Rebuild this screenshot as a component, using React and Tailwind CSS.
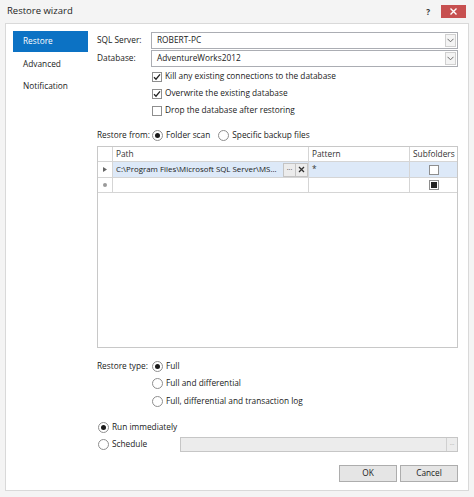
import React from "react";

const font = { fontFamily: '"Open Sans", "Noto Sans", sans-serif' };

function Chevron() {
  return (
    <svg width="7" height="5" viewBox="0 0 7 5">
      <path d="M0.5 0.8 L3.5 3.8 L6.5 0.8" fill="none" stroke="#6b6b6b" strokeWidth="1" />
    </svg>
  );
}

function Combo({ value }) {
  return (
    <div className="flex h-[17px] flex-1 items-center border border-[#abadb3] bg-white">
      <div className="flex-1 pl-[5px] text-[8.3px] text-[#1a1a1a]">{value}</div>
      <div className="mr-[1px] flex h-[13px] w-[11px] items-center justify-center border border-[#d0d0d0] bg-[#f4f4f4]">
        <Chevron />
      </div>
    </div>
  );
}

function Check({ checked }) {
  return (
    <div className="flex h-[10px] w-[10px] items-center justify-center border border-[#8e8e8e] bg-white">
      {checked && (
        <svg width="8" height="8" viewBox="0 0 8 8">
          <path d="M1 4.2 L3 6.2 L7 1.4" fill="none" stroke="#222" strokeWidth="1.3" />
        </svg>
      )}
    </div>
  );
}

function CheckRow({ checked, label }) {
  return (
    <div className="flex h-[17px] items-center pl-[55px]">
      <Check checked={checked} />
      <span className="ml-[3px] text-[8.3px] text-[#1a1a1a]">{label}</span>
    </div>
  );
}

function Radio({ on }) {
  return (
    <div className="flex h-[11px] w-[11px] items-center justify-center rounded-full border border-[#8e8e8e] bg-white">
      {on && <div className="h-[5px] w-[5px] rounded-full bg-[#1a1a1a]" />}
    </div>
  );
}

function RadioLabel({ on, label }) {
  return (
    <div className="flex items-center">
      <Radio on={on} />
      <span className="ml-[3px] text-[8.3px] text-[#1a1a1a]">{label}</span>
    </div>
  );
}

export default function App() {
  return (
    <div className="flex h-[497px] w-[474px] flex-col bg-[#f4f4f4]" style={font}>
      {/* title bar */}
      <div className="flex h-[23px] items-center pl-[7px] pr-[8px]">
        <span className="text-[9.5px] text-[#1e1e1e]">Restore wizard</span>
        <div className="flex-1" />
        <span className="mr-[11px] text-[8px] font-bold text-[#333]">?</span>
        <div className="flex h-[13px] w-[25px] items-center justify-center bg-[#c75050]">
          <svg width="7" height="7" viewBox="0 0 7 7">
            <path d="M0.5 0.5 L6.5 6.5 M6.5 0.5 L0.5 6.5" stroke="#fff" strokeWidth="1.4" />
          </svg>
        </div>
      </div>

      {/* panel */}
      <div className="mx-[5px] flex h-[468px] border border-[#d9d9d9] bg-white">
        {/* nav */}
        <div className="flex w-[91px] flex-col pl-[7px] pt-[7px] text-[8.3px] text-[#1a1a1a]">
          <div className="flex h-[21px] w-[75px] items-center bg-[#0c72c4] pl-[10px] text-white">Restore</div>
          <div className="mt-[1px] flex h-[22px] w-[75px] items-center pl-[10px]">Advanced</div>
          <div className="flex h-[22px] w-[75px] items-center pl-[10px]">Notification</div>
        </div>

        {/* content */}
        <div className="flex w-[361px] flex-col pt-[8px]">
          <div className="flex items-center">
            <span className="w-[54px] text-[8.3px] text-[#1a1a1a]">SQL Server:</span>
            <Combo value="ROBERT-PC" />
          </div>
          <div className="mt-[1px] flex items-center">
            <span className="w-[54px] text-[8.3px] text-[#1a1a1a]">Database:</span>
            <Combo value="AdventureWorks2012" />
          </div>
          <div className="mt-[1px]">
            <CheckRow checked label="Kill any existing connections to the database" />
            <CheckRow checked label="Overwrite the existing database" />
            <CheckRow checked={false} label="Drop the database after restoring" />
          </div>

          <div className="mt-[8px] flex h-[16px] items-center">
            <span className="w-[54px] whitespace-nowrap text-[8.3px] text-[#1a1a1a]">Restore from:</span>
            <div className="ml-[1px] flex items-center gap-[8px]">
              <RadioLabel on label="Folder scan" />
              <RadioLabel on={false} label="Specific backup files" />
            </div>
          </div>

          {/* grid */}
          <div className="mt-[3px] h-[202px] border border-[#c8c8c8] bg-white text-[8.3px] text-[#333]">
            <div className="flex h-[15px] border-b border-[#d5d5d5]">
              <div className="w-[15px] border-r border-[#d5d5d5]" />
              <div className="flex w-[196px] items-center border-r border-[#d5d5d5] pl-[3px]">Path</div>
              <div className="flex w-[101px] items-center border-r border-[#d5d5d5] pl-[3px]">Pattern</div>
              <div className="flex flex-1 items-center pl-[3px]">Subfolders</div>
            </div>
            <div className="flex h-[16px] border-b border-[#d5d5d5]">
              <div className="flex w-[15px] items-center justify-center border-r border-[#d5d5d5]">
                <svg width="4" height="5" viewBox="0 0 4 5">
                  <path d="M0 0 L4 2.5 L0 5 Z" fill="#666" />
                </svg>
              </div>
              <div className="flex w-[196px] items-center border-r border-[#d5d5d5] bg-[#dde9f8] pl-[3px] text-[#1a1a1a]">
                <span className="flex-1 overflow-hidden whitespace-nowrap text-[7.9px]">C:\Program Files\Microsoft SQL Server\MS...</span>
                <div className="flex h-[14px] w-[13px] shrink-0 items-center justify-center border border-[#c4c4c4] bg-[#ececec] text-[7px] leading-none">···</div>
                <div className="flex h-[14px] w-[12px] shrink-0 items-center justify-center border border-l-0 border-[#c4c4c4] bg-[#ececec]">
                  <svg width="7" height="7" viewBox="0 0 7 7">
                    <path d="M1 1 L6 6 M6 1 L1 6" stroke="#333" strokeWidth="1.3" />
                  </svg>
                </div>
              </div>
              <div className="flex w-[101px] items-center border-r border-[#d5d5d5] bg-[#dde9f8] pl-[3px]">*</div>
              <div className="flex flex-1 items-center justify-center bg-[#dde9f8]">
                <div className="h-[10px] w-[10px] border border-[#8e8e8e] bg-white" />
              </div>
            </div>
            <div className="flex h-[15px] border-b border-[#d5d5d5]">
              <div className="flex w-[15px] items-center justify-center border-r border-[#d5d5d5]">
                <div className="h-[4px] w-[4px] rounded-full bg-[#9a9a9a]" />
              </div>
              <div className="w-[196px] border-r border-[#d5d5d5]" />
              <div className="w-[101px] border-r border-[#d5d5d5]" />
              <div className="flex flex-1 items-center justify-center">
                <div className="flex h-[10px] w-[10px] items-center justify-center border border-[#8e8e8e] bg-white">
                  <div className="h-[6px] w-[6px] bg-[#222]" />
                </div>
              </div>
            </div>
          </div>

          {/* restore type */}
          <div className="mt-[10px]">
            <div className="flex h-[17px] items-center">
              <span className="w-[55px] text-[8.3px] text-[#1a1a1a]">Restore type:</span>
              <RadioLabel on label="Full" />
            </div>
            <div className="flex h-[17px] items-center pl-[55px]">
              <RadioLabel on={false} label="Full and differential" />
            </div>
            <div className="flex h-[18px] items-center pl-[55px]">
              <RadioLabel on={false} label="Full, differential and transaction log" />
            </div>
          </div>

          <div className="mt-[9px] flex h-[17px] items-center pl-[1px]">
            <RadioLabel on label="Run immediately" />
          </div>
          <div className="flex h-[17px] items-center pl-[1px]">
            <div className="w-[82px]">
              <RadioLabel on={false} label="Schedule" />
            </div>
            <div className="flex h-[15px] flex-1 items-center justify-end border border-[#c6c6c6] bg-[#ececec]">
              <div className="flex h-[13px] w-[11px] items-center justify-center border-l border-[#d0d0d0] text-[6px] text-[#888]">···</div>
            </div>
          </div>

          <div className="mt-[12px] flex justify-end gap-[3px]">
            <div className="flex h-[17px] w-[58px] items-center justify-center border border-[#adadad] bg-[#e5e5e5] text-[8.3px] text-[#1a1a1a]">OK</div>
            <div className="flex h-[17px] w-[58px] items-center justify-center border border-[#adadad] bg-[#e5e5e5] text-[8.3px] text-[#1a1a1a]">Cancel</div>
          </div>
        </div>
      </div>
    </div>
  );
}
